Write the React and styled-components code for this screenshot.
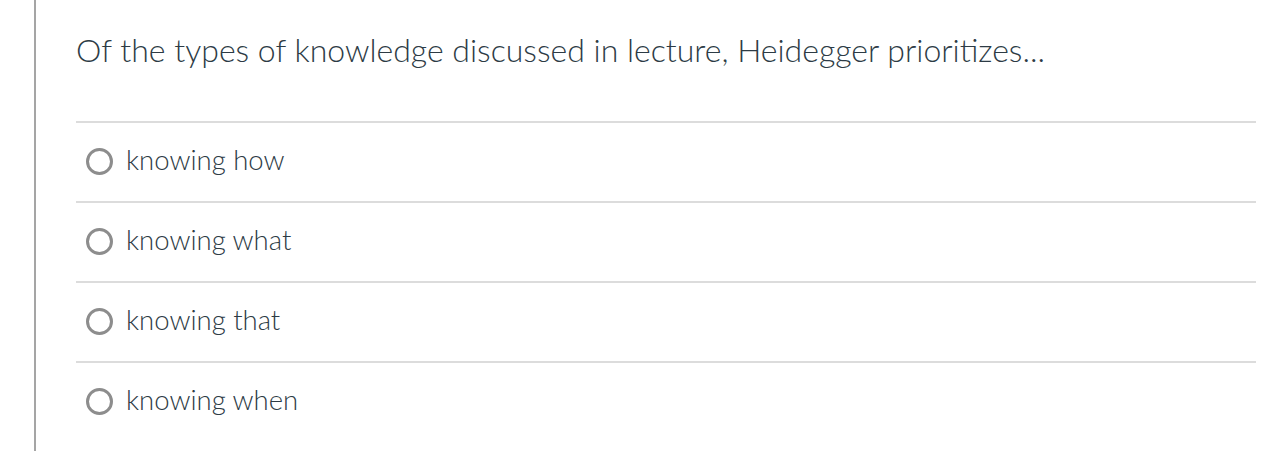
import React from 'react';
import styled, { createGlobalStyle } from 'styled-components';

const GlobalStyle = createGlobalStyle`
  html, body {
    margin: 0;
    padding: 0;
    background: #ffffff;
  }
  body {
    font-family: Lato, "Open Sans", sans-serif;
    color: #2d3b45;
  }
`;

const Page = styled.div`
  width: 1281px;
  height: 451px;
  display: flex;
  overflow: hidden;
`;

const Rail = styled.div`
  width: 34px;
  flex-shrink: 0;
  border-right: 2px solid #a5a5a5;
`;

const Question = styled.div`
  flex: 1;
  padding: 0 25px 0 40px;
`;

const QuestionText = styled.h2`
  margin: 0;
  padding-top: 30px;
  height: 121px;
  box-sizing: border-box;
  font-size: 32px;
  font-weight: 300;
  line-height: 40px;
`;

const Answers = styled.div`
  display: flex;
  flex-direction: column;
`;

const Answer = styled.label`
  display: flex;
  align-items: center;
  gap: 13px;
  height: 80px;
  padding: 0 0 6px 10px;
  box-sizing: border-box;
  border-top: 2px solid #dcdcdc;
  font-size: 27.5px;
  font-weight: 300;
`;

const Radio = styled.span`
  width: 27px;
  height: 27px;
  box-sizing: border-box;
  border: 3px solid #8d8d8d;
  border-radius: 50%;
  flex-shrink: 0;
  margin-top: 5px;
`;

const options = ['knowing how', 'knowing what', 'knowing that', 'knowing when'];

const App = () => {
  return (
    <>
      <GlobalStyle />
      <Page>
        <Rail />
        <Question>
          <QuestionText>
            Of the types of knowledge discussed in lecture, Heidegger prioritizes...
          </QuestionText>
          <Answers>
            {options.map((o) => (
              <Answer key={o}>
                <Radio />
                {o}
              </Answer>
            ))}
          </Answers>
        </Question>
      </Page>
    </>
  );
};

export default App;
